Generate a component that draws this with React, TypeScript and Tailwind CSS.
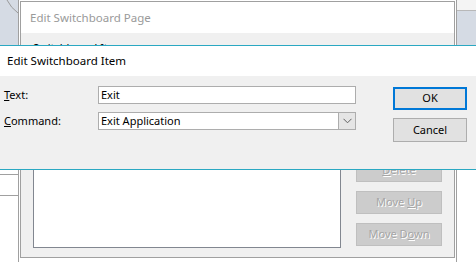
import React from "react";

const font = { fontFamily: '"Noto Sans", "Liberation Sans", sans-serif' };

function DisabledButton({ children }: { children: React.ReactNode }) {
  return (
    <div className="flex h-[23px] w-[86px] items-center justify-center border border-[#bfbfbf] bg-[#cccccc] text-[11px] text-[#a6a6a6] [text-shadow:1px_1px_0_#ffffff]">
      <span>{children}</span>
    </div>
  );
}

export default function App() {
  return (
    <div className="relative h-[262px] w-[476px] overflow-hidden bg-white text-black" style={font}>
      {/* window behind, left strip */}
      <div className="absolute left-0 top-0 flex h-full w-[19px] flex-col border-r border-[#a0a0a0]">
        <div className="relative h-[45px] bg-[#d5dbe4]">
          <svg className="absolute left-0 top-0" width="18" height="14" viewBox="0 0 18 14">
            <path d="M7 0 Q11 8 18 13" fill="none" stroke="#9a9a9a" strokeWidth="1" />
          </svg>
        </div>
        <div className="flex-1 bg-white pt-[129px]">
          <div className="h-[22px] border-y border-[#a0a0a0]" />
        </div>
      </div>

      {/* window behind, right strip */}
      <div className="absolute right-0 top-0 flex h-full w-[20px] flex-col border-l border-[#a0a0a0]">
        <div className="h-[11px] border-b border-[#b8b8b8] bg-[#f4f4f4]" />
        <div className="h-[34px] bg-[#d5dbe4]" />
        <div className="flex-1 bg-white" />
      </div>

      {/* Edit Switchboard Page */}
      <div className="absolute left-[20px] top-[1px] flex h-[257px] w-[435px] flex-col border border-[#a0a0a0]">
        <div className="flex h-[31px] items-center bg-white pl-[9px] text-[11.5px] text-[#9a9a9a]">
          Edit Switchboard Page
        </div>
        <div className="flex flex-1 bg-[#f0f0f0] pb-[9px] pl-[12px] pt-[7px]">
          <div className="flex w-[308px] flex-col">
            <div className="text-[11px] leading-[16px]">
              <span>
                Switchboard <span className="underline">I</span>tems:
              </span>
            </div>
            <div className="mt-[5px] flex-1 border border-[#828790] bg-white" />
          </div>
          <div className="ml-[15px] flex flex-col justify-end gap-[9px] pb-[2px]">
            <DisabledButton>
              <span className="underline">D</span>elete
            </DisabledButton>
            <DisabledButton>
              Move <span className="underline">U</span>p
            </DisabledButton>
            <DisabledButton>
              Move D<span className="underline">o</span>wn
            </DisabledButton>
          </div>
        </div>
      </div>

      {/* Edit Switchboard Item */}
      <div className="absolute left-0 top-[45px] flex h-[125px] w-full flex-col border-y border-[#2aa8c2]">
        <div className="flex h-[30px] items-center bg-white pl-[7px] text-[11.5px]">Edit Switchboard Item</div>
        <div className="flex flex-1 items-start bg-[#f0f0f0] pl-[4px] pt-[10px] text-[11px]">
          <div className="grid grid-cols-[94px_258px] gap-y-[8px]">
            <div className="flex h-[18px] items-center">
              <span>
                <span className="underline">T</span>ext:
              </span>
            </div>
            <div className="flex h-[18px] items-center border border-[#adadad] bg-white pl-[2px]">Exit</div>
            <div className="flex h-[18px] items-center">
              <span>
                <span className="underline">C</span>ommand:
              </span>
            </div>
            <div className="flex h-[18px] border border-[#adadad] bg-white">
              <div className="flex flex-1 items-center pl-[2px]">Exit Application</div>
              <div className="flex w-[17px] items-center justify-center border-l border-[#adadad] bg-[#e5e5e5]">
                <svg width="9" height="6" viewBox="0 0 9 6">
                  <path d="M0.5 0.8 L4.5 4.8 L8.5 0.8" fill="none" stroke="#606060" strokeWidth="1" />
                </svg>
              </div>
            </div>
          </div>
          <div className="ml-[37px] mt-[1px] flex flex-col gap-[8px]">
            <div className="flex h-[23px] w-[74px] items-center justify-center border-2 border-[#0078d7] bg-[#e1e1e1]">
              OK
            </div>
            <div className="flex h-[24px] w-[74px] items-center justify-center border border-[#adadad] bg-[#e1e1e1]">
              Cancel
            </div>
          </div>
        </div>
      </div>
    </div>
  );
}
